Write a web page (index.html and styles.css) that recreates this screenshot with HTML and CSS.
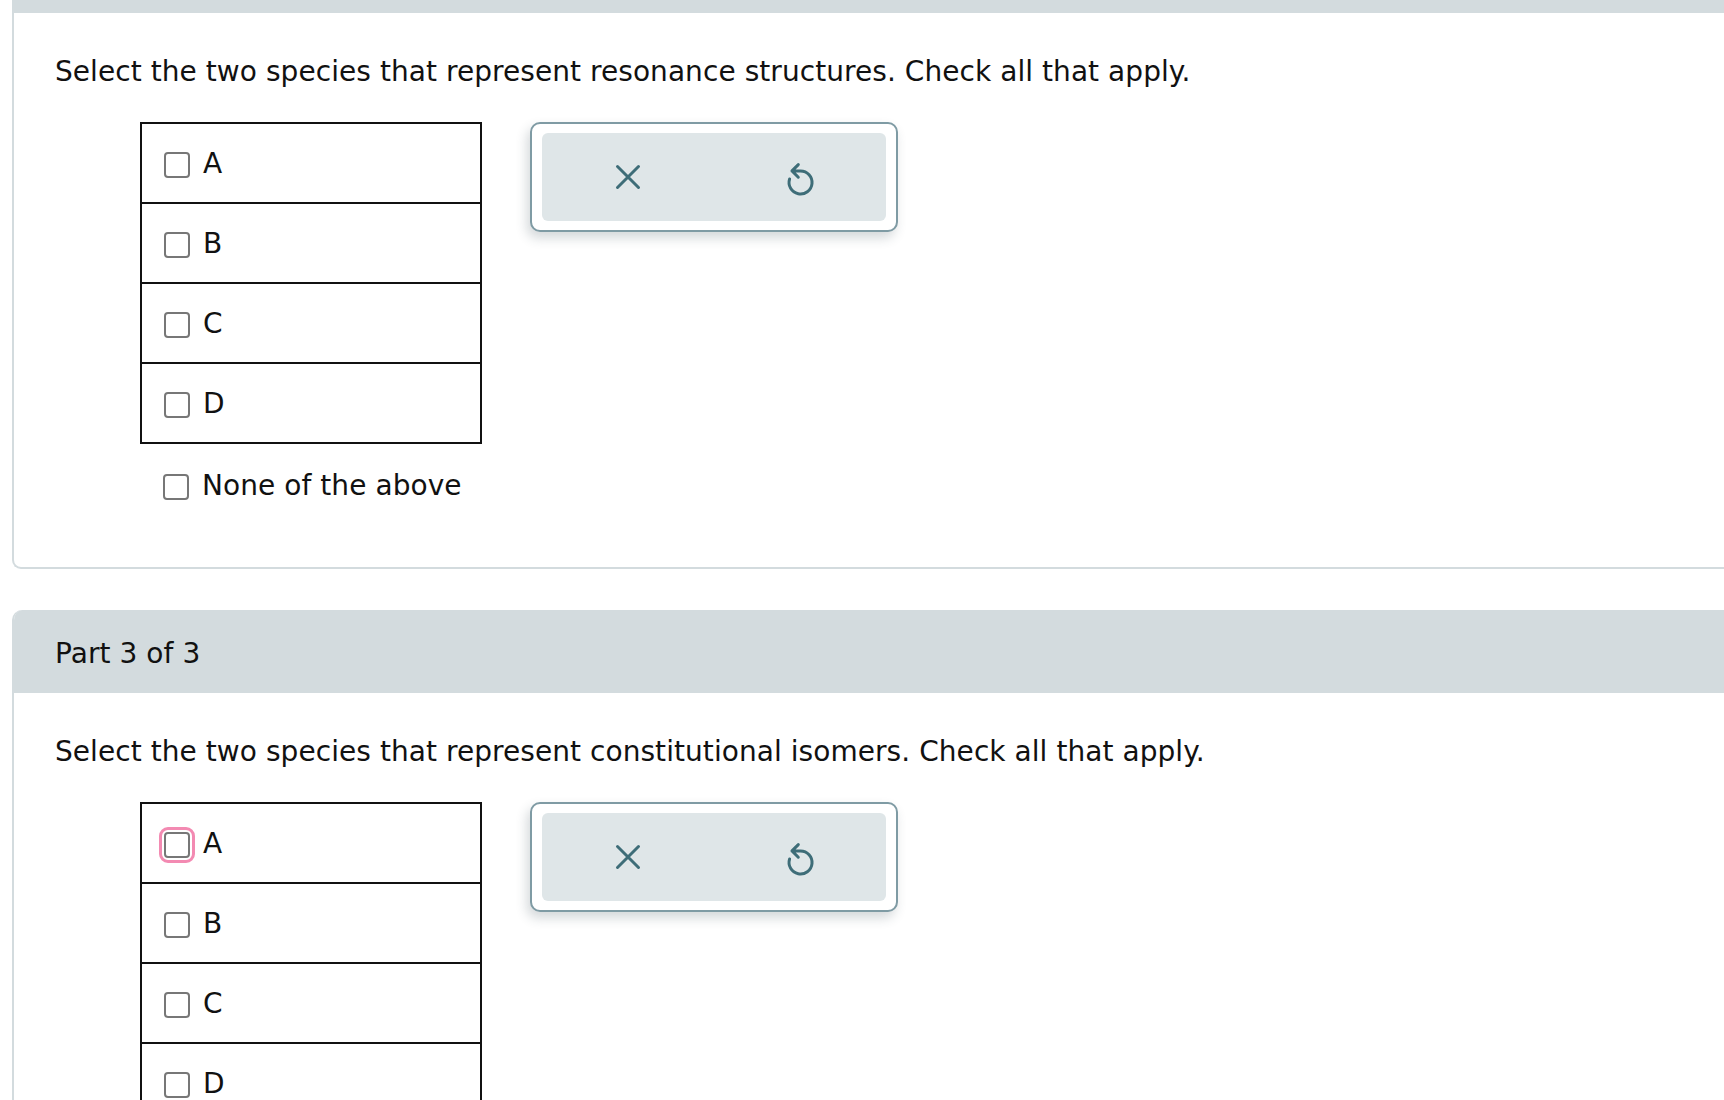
FILE: index.html
```html
<!DOCTYPE html>
<html lang="en">
<head>
<meta charset="utf-8">
<title>Resonance and isomers</title>
<link rel="stylesheet" href="styles.css">
</head>
<body>
<div class="page">
  <section class="card card-first">
    <div class="card-strip"></div>
    <div class="card-body">
      <p class="question">Select the two species that represent resonance structures. Check all that apply.</p>
      <div class="answer-row">
        <div class="choices">
          <div class="choice"><span class="box"></span><span class="label">A</span></div>
          <div class="choice"><span class="box"></span><span class="label">B</span></div>
          <div class="choice"><span class="box"></span><span class="label">C</span></div>
          <div class="choice"><span class="box"></span><span class="label">D</span></div>
        </div>
        <div class="tools">
          <div class="tools-inner">
            <button class="tool" type="button" aria-label="Clear">
              <svg class="icon-x" width="26" height="26" viewBox="0 0 26 26"><path d="M2.5 2.5 L23.5 23.5 M23.5 2.5 L2.5 23.5" fill="none" stroke="#3e6d78" stroke-width="3" stroke-linecap="round"/></svg>
            </button>
            <button class="tool" type="button" aria-label="Reset">
              <svg class="icon-redo" width="40" height="45" viewBox="0 0 40 45"><path d="M18.3 9.6 L12 15.9 L18.3 22.2 M12 16 H20.5 A11.5 11.5 0 1 1 9.6 24" fill="none" stroke="#3e6d78" stroke-width="3" stroke-linecap="round" stroke-linejoin="round"/></svg>
            </button>
          </div>
        </div>
      </div>
      <div class="none-row"><span class="box"></span><span class="label">None of the above</span></div>
    </div>
  </section>

  <section class="card card-second">
    <header class="part-header">Part 3 of 3</header>
    <div class="card-body">
      <p class="question">Select the two species that represent constitutional isomers. Check all that apply.</p>
      <div class="answer-row">
        <div class="choices">
          <div class="choice"><span class="box focused"></span><span class="label">A</span></div>
          <div class="choice"><span class="box"></span><span class="label">B</span></div>
          <div class="choice"><span class="box"></span><span class="label">C</span></div>
          <div class="choice"><span class="box"></span><span class="label">D</span></div>
        </div>
        <div class="tools">
          <div class="tools-inner">
            <button class="tool" type="button" aria-label="Clear">
              <svg class="icon-x" width="26" height="26" viewBox="0 0 26 26"><path d="M2.5 2.5 L23.5 23.5 M23.5 2.5 L2.5 23.5" fill="none" stroke="#3e6d78" stroke-width="3" stroke-linecap="round"/></svg>
            </button>
            <button class="tool" type="button" aria-label="Reset">
              <svg class="icon-redo" width="40" height="45" viewBox="0 0 40 45"><path d="M18.3 9.6 L12 15.9 L18.3 22.2 M12 16 H20.5 A11.5 11.5 0 1 1 9.6 24" fill="none" stroke="#3e6d78" stroke-width="3" stroke-linecap="round" stroke-linejoin="round"/></svg>
            </button>
          </div>
        </div>
      </div>
    </div>
  </section>
</div>
</body>
</html>
```

FILE: styles.css
```css
html, body {
  margin: 0;
  padding: 0;
  background: #ffffff;
  overflow: hidden;
}

body {
  font-family: "DejaVu Sans", Verdana, sans-serif;
  font-size: 28px;
  line-height: 33px;
  letter-spacing: 0.06px;
  color: #111111;
}

.page {
  padding-left: 12px;
}

.card {
  margin-right: -40px;
  border-left: 2px solid #d3dbde;
  background: #ffffff;
}

.card-first {
  border-bottom: 2px solid #d3dbde;
  border-bottom-left-radius: 9px;
}

.card-strip {
  height: 13px;
  background: #d3dbde;
  margin-left: -2px;
}

.card-second {
  margin-top: 41px;
  border-top-left-radius: 10px;
  overflow: hidden;
}

.part-header {
  background: #d3dbde;
  padding: 27px 0 23px 41px;
}

.card-body {
  padding: 42px 0 65px 41px;
}

.question {
  margin: 0 0 34px 0;
}

.answer-row {
  display: flex;
  align-items: flex-start;
  margin-left: 85px;
}

.choices {
  width: 342px;
  border: 2px solid #111111;
  box-sizing: border-box;
}

.choice {
  display: flex;
  align-items: flex-start;
  height: 78px;
  padding: 23px 0 0 22px;
  box-sizing: border-box;
}

.choice + .choice {
  border-top: 2px solid #111111;
  height: 80px;
}

.box {
  width: 26px;
  height: 26px;
  margin-top: 5px;
  border: 2px solid #777777;
  border-radius: 4px;
  box-sizing: border-box;
  background: #ffffff;
  flex: none;
}

.box.focused {
  outline: 3.5px solid #f38ab2;
  outline-offset: 2.5px;
}

.label {
  margin-left: 13px;
}

.none-row {
  display: flex;
  align-items: flex-start;
  margin: 25px 0 0 86px;
  padding-left: 22px;
}

.tools {
  margin-left: 48px;
  width: 368px;
  box-sizing: border-box;
  border: 2px solid #7f9ba4;
  border-radius: 10px;
  padding: 9px 10px;
  background: #ffffff;
  box-shadow: -3px 6px 12px rgba(40, 60, 70, 0.2);
}

.tools-inner {
  display: flex;
  height: 88px;
  background: #dfe6e8;
  border-radius: 6px;
}

.tool {
  flex: 1;
  display: flex;
  align-items: center;
  justify-content: center;
  background: transparent;
  border: 0;
  padding: 0;
  margin: 0;
}

.tool svg {
  display: block;
}
```
